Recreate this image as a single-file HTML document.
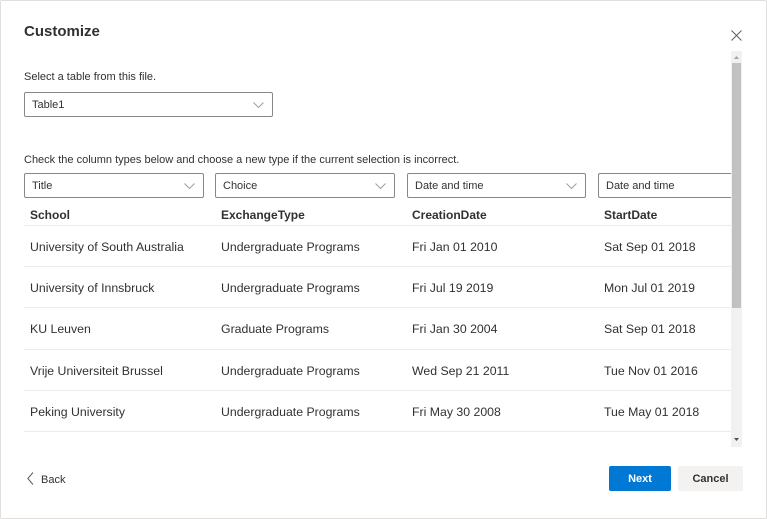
<!DOCTYPE html>
<html><head><style>
*{margin:0;padding:0;box-sizing:border-box}
body{width:767px;height:519px;background:#fff;font-family:"Liberation Sans",sans-serif;color:#323130;position:relative;overflow:hidden;font-size:12px}
.a{position:absolute;white-space:nowrap}
.dd{position:absolute;height:25px;border:1px solid #8a8886;border-radius:2px;font-size:11px;padding:6px 0 0 7px}
.dd svg{position:absolute;right:8px;top:9px}
.h{position:absolute;top:208px;font-weight:bold;font-size:12px}
.c{position:absolute;font-size:12.3px}
.ln{position:absolute;left:24px;width:707px;height:1px;background:#edebe9}
</style></head><body>
<div style="position:absolute;inset:0;border:1px solid #e1dfdd;border-radius:2px"></div>
<div class="a" style="left:24px;top:23px;font-size:15px;font-weight:bold;color:#323130">Customize</div>
<svg class="a" style="left:731px;top:30px" width="11" height="11"><path d="M0.5 0.5L10.5 10.5M10.5 0.5L0.5 10.5" stroke="#605e5c" stroke-width="1"/></svg>
<div class="a" style="left:24px;top:71px;font-size:11px">Select a table from this file.</div>
<div class="dd" style="left:24px;top:92px;width:249px">Table1<svg width="11" height="6"><path d="M0.5 0.5L5.5 5.5L10.5 0.5" stroke="#a19f9d" fill="none"/></svg></div>
<div class="a" style="left:24px;top:154px;font-size:11px">Check the column types below and choose a new type if the current selection is incorrect.</div>
<div class="dd" style="left:24px;top:173px;width:180px">Title<svg width="11" height="6"><path d="M0.5 0.5L5.5 5.5L10.5 0.5" stroke="#a19f9d" fill="none"/></svg></div>
<div class="dd" style="left:215px;top:173px;width:180px">Choice<svg width="11" height="6"><path d="M0.5 0.5L5.5 5.5L10.5 0.5" stroke="#a19f9d" fill="none"/></svg></div>
<div class="dd" style="left:407px;top:173px;width:179px">Date and time<svg width="11" height="6"><path d="M0.5 0.5L5.5 5.5L10.5 0.5" stroke="#a19f9d" fill="none"/></svg></div>
<div class="dd" style="left:598px;top:173px;width:140px;border-right:none">Date and time</div>
<div class="h" style="left:30px">School</div>
<div class="h" style="left:221px">ExchangeType</div>
<div class="h" style="left:412px">CreationDate</div>
<div class="h" style="left:604px">StartDate</div>
<div class="ln" style="top:225px"></div><div class="ln" style="top:266px"></div><div class="ln" style="top:307px"></div><div class="ln" style="top:349px"></div><div class="ln" style="top:390px"></div><div class="ln" style="top:431px"></div>
<div class="c" style="left:30px;top:240px">University of South Australia</div><div class="c" style="left:221px;top:240px">Undergraduate Programs</div><div class="c" style="left:412px;top:240px">Fri Jan 01 2010</div><div class="c" style="left:604px;top:240px">Sat Sep 01 2018</div>
<div class="c" style="left:30px;top:281px">University of Innsbruck</div><div class="c" style="left:221px;top:281px">Undergraduate Programs</div><div class="c" style="left:412px;top:281px">Fri Jul 19 2019</div><div class="c" style="left:604px;top:281px">Mon Jul 01 2019</div>
<div class="c" style="left:30px;top:322px">KU Leuven</div><div class="c" style="left:221px;top:322px">Graduate Programs</div><div class="c" style="left:412px;top:322px">Fri Jan 30 2004</div><div class="c" style="left:604px;top:322px">Sat Sep 01 2018</div>
<div class="c" style="left:30px;top:364px">Vrije Universiteit Brussel</div><div class="c" style="left:221px;top:364px">Undergraduate Programs</div><div class="c" style="left:412px;top:364px">Wed Sep 21 2011</div><div class="c" style="left:604px;top:364px">Tue Nov 01 2016</div>
<div class="c" style="left:30px;top:405px">Peking University</div><div class="c" style="left:221px;top:405px">Undergraduate Programs</div><div class="c" style="left:412px;top:405px">Fri May 30 2008</div><div class="c" style="left:604px;top:405px">Tue May 01 2018</div>
<div class="a" style="left:731px;top:51px;width:11px;height:396px;background:#f1f1f1"></div>
<div class="a" style="left:732px;top:63px;width:9px;height:245px;background:#c1c1c1"></div>
<svg class="a" style="left:733px;top:55px" width="7" height="5"><path d="M3.5 1L6 4H1z" fill="#a3a3a3"/></svg>
<svg class="a" style="left:733px;top:437px" width="7" height="5"><path d="M1 1H6L3.5 4z" fill="#505050"/></svg>
<svg class="a" style="left:27px;top:472px" width="7" height="13"><path d="M6 0.5L0.8 6.5L6 12.5" stroke="#605e5c" fill="none"/></svg>
<div class="a" style="left:41px;top:474px;font-size:11px">Back</div>
<div class="a" style="left:609px;top:466px;width:62px;height:25px;background:#0078d4;border-radius:2px;color:#fff;font-weight:bold;font-size:11px;text-align:center;line-height:27px">Next</div>
<div class="a" style="left:678px;top:466px;width:65px;height:25px;background:#f3f2f1;border-radius:2px;font-weight:bold;font-size:11px;text-align:center;line-height:27px">Cancel</div>
</body></html>
